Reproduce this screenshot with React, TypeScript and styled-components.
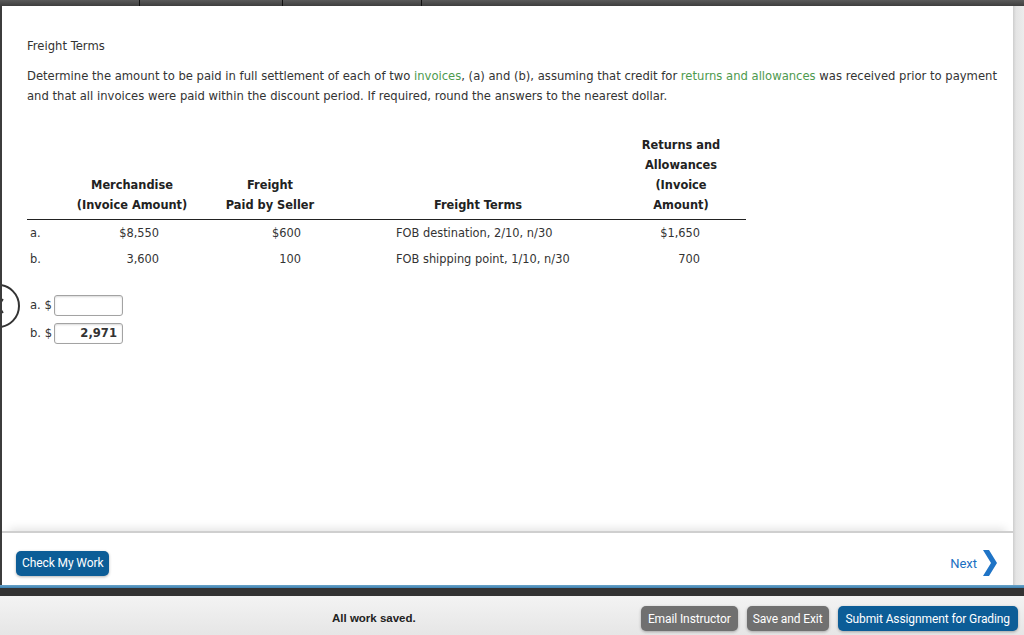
import React from 'react';
import styled, { createGlobalStyle } from 'styled-components';

const GlobalStyle = createGlobalStyle`
  html, body {
    margin: 0;
    padding: 0;
    background: #ffffff;
  }
  body {
    font-family: "DejaVu Sans", Verdana, sans-serif;
    color: #333333;
  }
`;

const Page = styled.div`
  width: 1024px;
  height: 635px;
  display: flex;
  flex-direction: column;
  overflow: hidden;
`;

const TopBar = styled.div`
  height: 6px;
  display: flex;
  background: linear-gradient(#5a5a5a, #3e3e3e);
`;

const Tab = styled.div<{ $w?: number }>`
  width: ${p => (p.$w ? `${p.$w}px` : 'auto')};
  flex: ${p => (p.$w ? 'none' : '1')};
  border-right: 1px solid #111111;
  &:last-child {
    border-right: none;
  }
`;

const Body = styled.div`
  flex: 1;
  display: flex;
  min-height: 0;
`;

const Main = styled.div`
  flex: 1;
  display: flex;
  flex-direction: column;
  border-left: 2px solid #3c3c3c;
  background: #ffffff;
  position: relative;
  overflow: hidden;
`;

const Scroller = styled.div`
  width: 11px;
  background: linear-gradient(to right, #cdcdcd, #e4e4e4 3px, #ececec);
`;

const Question = styled.div`
  flex: 1;
  padding: 30px 14px 0 25px;
  font-size: 11.6px;
  line-height: 20px;
`;

const Title = styled.div`
  margin-bottom: 10px;
`;

const Para = styled.p`
  margin: 0;
`;

const Term = styled.span`
  color: #4e9a4e;
`;

const Table = styled.table`
  margin-top: 29px;
  border-collapse: collapse;
  font-size: 11.4px;
`;

const Th = styled.th<{ $w: number }>`
  width: ${p => p.$w}px;
  padding: 0 0 4px;
  font-weight: bold;
  text-align: center;
  vertical-align: bottom;
  line-height: 20px;
  color: #222222;
  border-bottom: 1px solid #222222;
`;

const Td = styled.td<{ $align?: string; $pl?: number; $pr?: number }>`
  height: 26px;
  padding: 0 ${p => p.$pr ?? 0}px 0 ${p => p.$pl ?? 0}px;
  text-align: ${p => p.$align ?? 'right'};
  vertical-align: middle;
  color: #333333;
  white-space: nowrap;
`;

const Answers = styled.div`
  margin-top: 22px;
  display: flex;
  flex-direction: column;
  gap: 6px;
`;

const AnswerRow = styled.div`
  display: flex;
  align-items: center;
  height: 22px;
  padding-left: 3px;
`;

const AnswerLabel = styled.span`
  width: 24px;
`;

const Input = styled.div`
  width: 62px;
  height: 19px;
  border: 1px solid #a3a3a3;
  border-radius: 3px;
  box-shadow: inset 0 1px 2px rgba(0, 0, 0, 0.15);
  font-weight: bold;
  text-align: right;
  padding-right: 5px;
  box-sizing: content-box;
  line-height: 19px;
  color: #333333;
`;

const BackCircle = styled.div`
  position: absolute;
  left: -26px;
  top: 278px;
  width: 44px;
  height: 44px;
  border: 2px solid #333333;
  border-radius: 50%;
  background: #ffffff;
  display: flex;
  align-items: center;
  justify-content: flex-end;
  padding-right: 14px;
  box-sizing: border-box;
`;

const Footer = styled.div`
  height: 54px;
  border-top: 2px solid #cfcfcf;
  box-shadow: 0 -9px 9px -7px rgba(0, 0, 0, 0.12);
  display: flex;
  align-items: center;
  justify-content: space-between;
  padding: 8px 16px 0 14px;
  box-sizing: border-box;
`;

const PrimaryButton = styled.div<{ $tone?: 'blue' | 'grey'; $px?: number }>`
  height: 25px;
  padding: 0 ${p => p.$px ?? 7}px;
  border-radius: 5px;
  background: ${p => (p.$tone === 'grey' ? '#707070' : '#0c5d97')};
  color: #ffffff;
  font-family: Roboto, "Liberation Sans", sans-serif;
  font-size: 12px;
  letter-spacing: -0.1px;
  display: flex;
  align-items: center;
  box-shadow: 0 1px 3px rgba(0, 0, 0, 0.3);
  white-space: nowrap;
`;

const NextLink = styled.div`
  display: flex;
  align-items: center;
  gap: 6px;
  color: #1a6fc2;
  font-family: Roboto, "Liberation Sans", sans-serif;
  font-size: 13px;
`;

const BlueLine = styled.div`
  height: 3px;
  background: linear-gradient(#6aa3c8, #3d82b2);
`;

const DarkBar = styled.div`
  height: 8px;
  background: #333333;
`;

const BottomBar = styled.div`
  flex: none;
  height: 39px;
  display: flex;
  align-items: center;
  padding: 0 6px 0 332px;
  background: linear-gradient(#f3f3f3, #e6e6e6);
`;

const Saved = styled.div`
  flex: 1;
  font-family: "Liberation Sans", Arial, sans-serif;
  font-weight: bold;
  font-size: 11.5px;
  color: #222222;
  padding-top: 5px;
`;

const ButtonGroup = styled.div`
  display: flex;
  gap: 9px;
  padding-top: 6px;
`;

const rows = [
  { label: 'a.', merch: '$8,550', freight: '$600', terms: 'FOB destination, 2/10, n/30', returns: '$1,650' },
  { label: 'b.', merch: '3,600', freight: '100', terms: 'FOB shipping point, 1/10, n/30', returns: '700' },
];

function Chevron() {
  return (
    <svg width="14" height="26" viewBox="0 0 14 26">
      <polygon points="0,0 6,0 14,13 6,26 0,26 8,13" fill="#1f74c6" />
    </svg>
  );
}

export default function App() {
  return (
    <Page>
      <GlobalStyle />
      <TopBar>
        <Tab $w={139} />
        <Tab $w={142} />
        <Tab $w={138} />
        <Tab />
      </TopBar>
      <Body>
        <Main>
          <BackCircle>
            <svg width="6" height="16" viewBox="0 0 6 16">
              <path d="M5 1 L1 8 L5 15" stroke="#333" strokeWidth="1.6" fill="none" />
            </svg>
          </BackCircle>
          <Question>
            <Title>Freight Terms</Title>
            <Para>
              Determine the amount to be paid in full settlement of each of two <Term>invoices</Term>, (a) and (b),
              assuming that credit for <Term>returns and allowances</Term> was received prior to payment and that all
              invoices were paid within the discount period. If required, round the answers to the nearest dollar.
            </Para>
            <Table>
              <thead>
                <tr>
                  <Th $w={37}></Th>
                  <Th $w={136}>Merchandise<br />(Invoice Amount)</Th>
                  <Th $w={140}>Freight<br />Paid by Seller</Th>
                  <Th $w={276}>Freight Terms</Th>
                  <Th $w={130}>Returns and<br />Allowances<br />(Invoice<br />Amount)</Th>
                </tr>
              </thead>
              <tbody>
                {rows.map(r => (
                  <tr key={r.label}>
                    <Td $align="left" $pl={3}>{r.label}</Td>
                    <Td $pr={41}>{r.merch}</Td>
                    <Td $pr={39}>{r.freight}</Td>
                    <Td $align="left" $pl={56}>{r.terms}</Td>
                    <Td $pr={46}>{r.returns}</Td>
                  </tr>
                ))}
              </tbody>
            </Table>
            <Answers>
              <AnswerRow>
                <AnswerLabel>a. $</AnswerLabel>
                <Input />
              </AnswerRow>
              <AnswerRow>
                <AnswerLabel>b. $</AnswerLabel>
                <Input>2,971</Input>
              </AnswerRow>
            </Answers>
          </Question>
          <Footer>
            <PrimaryButton $px={6}>Check My Work</PrimaryButton>
            <NextLink>
              Next
              <Chevron />
            </NextLink>
          </Footer>
        </Main>
        <Scroller />
      </Body>
      <BlueLine />
      <DarkBar />
      <BottomBar>
        <Saved>All work saved.</Saved>
        <ButtonGroup>
          <PrimaryButton $tone="grey">Email Instructor</PrimaryButton>
          <PrimaryButton $tone="grey" $px={6}>Save and Exit</PrimaryButton>
          <PrimaryButton $px={8}>Submit Assignment for Grading</PrimaryButton>
        </ButtonGroup>
      </BottomBar>
    </Page>
  );
}
